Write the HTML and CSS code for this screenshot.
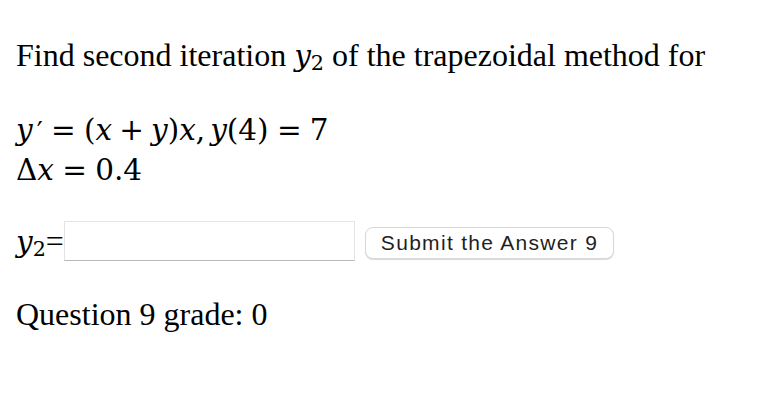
FILE: index.html
```html
<!DOCTYPE html>
<html lang="en">
<head>
    <meta charset="UTF-8">
    <title>Question 9</title>
    <link rel="stylesheet" href="styles.css">
</head>
<body>
    <p class="prompt">Find second iteration <span class="math"><i>y</i><sub>2</sub></span> of the trapezoidal method for</p>
    <p class="equations">
        <span class="math"><i>y</i><span class="prime">&prime;</span><span class="rel">=</span>(<i>x</i><span class="bin">+</span><i>y</i>)<i>x</i>,<span class="thin"></span><i>y</i>(4)<span class="rel">=</span>7</span><br>
        <span class="math">&Delta;<i>x</i><span class="rel">=</span>0.4</span>
    </p>
    <form class="answer-row" onsubmit="return false">
        <label for="answer"><span class="math"><i>y</i><sub>2</sub></span>=</label>
        <input type="text" id="answer" class="answer-input">
        <button class="submit-button">Submit the Answer 9</button>
    </form>
    <p class="grade">Question 9 grade: 0</p>
</body>
</html>
```

FILE: styles.css
```css
body {
    margin: 0;
    padding: 0 16px;
    font-family: "Liberation Serif", "Times New Roman", serif;
    font-size: 32px;
    line-height: 40px;
    color: #000;
    background: #fff;
}
p {
    margin: 0;
}
.prompt {
    padding-top: 35px;
}
.equations {
    margin-top: 34px;
}
.math {
    font-family: "DejaVu Serif", serif;
    font-size: 29.5px;
    line-height: 1;
}
.math i {
    font-style: italic;
}
.math sub {
    font-size: 0.7em;
    vertical-align: -0.2em;
    line-height: 0;
}
.math .prime {
    display: inline-block;
    margin-left: 4px;
    font-size: 0.9em;
}
.math .rel {
    margin: 0 0.28em;
}
.math .bin {
    margin: 0 0.24em;
}
.math .thin {
    margin-left: 0.17em;
}
.answer-row {
    display: flex;
    align-items: center;
    margin: 32px 0 0;
    height: 40px;
}
.answer-input {
    width: 291px;
    height: 40px;
    box-sizing: border-box;
    border: 1px solid #e4e4e4;
    border-bottom-color: #b8b8b8;
    margin: 0 10px 0 0;
    padding: 0 8px;
    font-size: 19px;
}
.submit-button {
    font-family: "Liberation Sans", Arial, sans-serif;
    font-size: 21px;
    letter-spacing: 1.3px;
    color: #1f1f1f;
    background: #fff;
    border: 1px solid #d8d8d8;
    border-radius: 8px;
    height: 32px;
    margin-top: 3px;
    padding: 0 15px;
    box-shadow: 0 1px 1px rgba(0, 0, 0, 0.15);
}
.grade {
    margin-top: 33px;
}
```
